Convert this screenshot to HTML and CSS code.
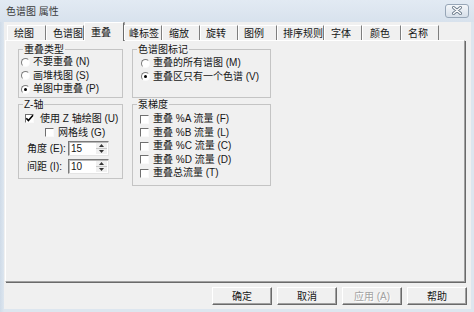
FILE: index.html
```html
<!DOCTYPE html>
<html lang="zh">
<head>
<meta charset="utf-8">
<title>色谱图 属性</title>
<link rel="stylesheet" href="styles.css">
</head>
<body>
<div class="window">
  <div class="titlebar">
    <span class="title">色谱图 属性</span>
    <span class="close">
      <svg width="12" height="9" viewBox="0 0 12 9"><path d="M2.5 1.5 L9.5 7.5 M9.5 1.5 L2.5 7.5" stroke="#6d7c8c" stroke-width="3" stroke-linecap="round"/><path d="M2.5 1.5 L9.5 7.5 M9.5 1.5 L2.5 7.5" stroke="#fff" stroke-width="1.3" stroke-linecap="round"/></svg>
    </span>
  </div>
  <div class="client">
    <div class="tabs">
      <div class="tab">绘图</div>
      <div class="tab">色谱图</div>
      <div class="tab active">重叠</div>
      <div class="tab">峰标签</div>
      <div class="tab">缩放</div>
      <div class="tab">旋转</div>
      <div class="tab">图例</div>
      <div class="tab">排序规则</div>
      <div class="tab">字体</div>
      <div class="tab">颜色</div>
      <div class="tab">名称</div>
    </div>
    <div class="panel">
      <fieldset class="group g-type">
        <legend>重叠类型</legend>
        <div class="opt"><span class="radio"></span>不要重叠 (N)</div>
        <div class="opt"><span class="radio"></span>画堆栈图 (S)</div>
        <div class="opt"><span class="radio on"></span>单图中重叠 (P)</div>
      </fieldset>
      <fieldset class="group g-mark">
        <legend>色谱图标记</legend>
        <div class="opt"><span class="radio"></span>重叠的所有谱图 (M)</div>
        <div class="opt"><span class="radio on"></span>重叠区只有一个色谱 (V)</div>
      </fieldset>
      <fieldset class="group g-z">
        <legend>Z-轴</legend>
        <div class="zrow use"><span class="check"><svg width="9" height="9" viewBox="0 0 9 9"><path d="M1.3 4.2 L3.4 6.6 L8 1.2" fill="none" stroke="#000" stroke-width="1.6"/></svg></span>使用 Z 轴绘图 (U)</div>
        <div class="zrow grid"><span class="check"></span>网格线 (G)</div>
        <div class="field first"><span class="flabel">角度 (E):</span><span class="spin"><span class="spin-val">15</span><span class="spin-btns"><span class="sb"><svg width="5" height="3" viewBox="0 0 5 3"><path d="M0 3 L2.5 0 L5 3Z" fill="#333"/></svg></span><span class="sb"><svg width="5" height="3" viewBox="0 0 5 3"><path d="M0 0 L2.5 3 L5 0Z" fill="#333"/></svg></span></span></span></div>
        <div class="field"><span class="flabel">间距 (I):</span><span class="spin"><span class="spin-val">10</span><span class="spin-btns"><span class="sb"><svg width="5" height="3" viewBox="0 0 5 3"><path d="M0 3 L2.5 0 L5 3Z" fill="#333"/></svg></span><span class="sb"><svg width="5" height="3" viewBox="0 0 5 3"><path d="M0 0 L2.5 3 L5 0Z" fill="#333"/></svg></span></span></span></div>
      </fieldset>
      <fieldset class="group g-pump">
        <legend>泵梯度</legend>
        <div class="opt"><span class="check"></span>重叠 %A 流量 (F)</div>
        <div class="opt"><span class="check"></span>重叠 %B 流量 (L)</div>
        <div class="opt"><span class="check"></span>重叠 %C 流量 (C)</div>
        <div class="opt"><span class="check"></span>重叠 %D 流量 (D)</div>
        <div class="opt"><span class="check"></span>重叠总流量 (T)</div>
      </fieldset>
    </div>
    <div class="buttons">
      <button class="btn">确定</button>
      <button class="btn">取消</button>
      <button class="btn" disabled>应用 (A)</button>
      <button class="btn">帮助</button>
    </div>
  </div>
</div>
</body>
</html>
```
FILE: styles.css
```css
* { box-sizing: border-box; }
html, body { margin: 0; padding: 0; }
body {
  width: 474px;
  height: 312px;
  overflow: hidden;
  background: linear-gradient(90deg, #cfdbe8, #dde6ef 4px, #dde6ef);
  font-family: "Liberation Sans", "Noto Sans CJK SC", sans-serif;
  font-size: 10px;
  color: #161616;
}
.window { display: flex; flex-direction: column; height: 312px; }
.titlebar {
  height: 22px;
  display: flex;
  align-items: center;
  justify-content: space-between;
  padding: 0 5px 0 6px;
  background: linear-gradient(#e2eaf3, #d8e2ed);
}
.title { line-height: 12px; color: #3c3c3c; margin-top: 2px; }
.close {
  width: 24px;
  height: 14px;
  margin-top: -1px;
  border: 1px solid #97a6b7;
  border-radius: 3px;
  background: linear-gradient(#f4f7fa, #d6dfe9);
  display: flex;
  align-items: center;
  justify-content: center;
}
.client {
  flex: 1;
  margin: 0 3px 3px 4px;
  background: #f0f0f0;
  display: flex;
  flex-direction: column;
}
.tabs {
  height: 18px;
  display: flex;
  align-items: flex-end;
  padding-left: 3px;
  position: relative;
  z-index: 1;
}
.tab {
  width: 38px;
  height: 15px;
  padding: 1px 0 0 6px;
  line-height: 13px;
  white-space: nowrap;
  border-top: 1px solid #fff;
  border-left: 1px solid #fff;
  border-right: 1px solid #7e7e7e;
  background: #f0f0f0;
}
.tab:nth-child(1), .tab:nth-child(7), .tab:nth-child(10) { width: 39px; }
.tab:nth-child(4) { padding-left: 4px; }
.tab:nth-child(6), .tab:nth-child(7), .tab:nth-child(8) { padding-left: 5px; }
.tab:nth-child(8) { width: 47px; }
.tab:nth-child(10) { padding-left: 7px; }
.tab.active {
  width: 40px;
  height: 19px;
  margin-bottom: -1px;
  padding-top: 3px;
  line-height: 14px;
  border-right-color: #6a6a6a;
  box-shadow: 1px 0 0 #a0a0a0;
}
.panel {
  width: 460px;
  height: 242px;
  margin-left: 1px;
  border: 1px solid;
  border-color: #fff #a0a0a0 #a0a0a0 #fff;
  box-shadow: 1px 1px 0 #6a6a6a;
  display: grid;
  grid-template-columns: 105px 139px;
  grid-template-rows: 55px auto;
  column-gap: 9px;
  align-items: start;
  align-content: start;
  padding: 2px 0 0 12px;
}
.group {
  margin: 0;
  padding: 0;
  min-width: 0;
  border: 1px solid #c4c4c4;
}
.group legend {
  margin-left: 4px;
  padding: 1px 1px 0;
  line-height: 11px;
  font-size: 10px;
  background: #f0f0f0;
}
.g-type, .g-mark { height: 55px; }
.g-z { height: 81px; }
.g-pump { height: 88px; }
.opt {
  display: flex;
  align-items: center;
  height: 13.5px;
  line-height: 12px;
  padding-top: 1px;
  white-space: nowrap;
}
.g-type .opt { padding-left: 2px; }
.g-mark { padding-top: 1px; }
.g-mark .opt { padding-left: 8px; }
.g-pump { padding-top: 2px; }
.g-pump .opt { padding-left: 7px; }
.radio {
  width: 9px;
  height: 9px;
  margin-right: 3px;
  border-radius: 50%;
  border: 1px solid;
  border-color: #7d7d7d #fafafa #fafafa #7d7d7d;
  background: #fff;
  display: flex;
  align-items: center;
  justify-content: center;
  flex: none;
}
.radio.on::after {
  content: "";
  width: 3px;
  height: 3px;
  border-radius: 50%;
  background: #000;
}
.check {
  width: 9px;
  height: 9px;
  margin-right: 4px;
  border: 1px solid;
  border-color: #6f6f6f #fafafa #fafafa #6f6f6f;
  background: #fff;
  display: flex;
  align-items: center;
  justify-content: center;
  flex: none;
  overflow: visible;
}
.check svg { flex: none; }
.g-z { padding-top: 1px; }
.zrow {
  height: 14px;
  line-height: 12px;
  padding-top: 1px;
  display: flex;
  align-items: center;
  white-space: nowrap;
}
.zrow.use { padding-left: 6px; }
.zrow.use .check { margin-right: 6px; }
.zrow.grid { padding-left: 26px; }
.field {
  display: flex;
  align-items: center;
  height: 15px;
  line-height: 12px;
  margin-top: 3px;
  padding-left: 8px;
}
.field.first { margin-top: 2px; }
.flabel { width: 41px; white-space: nowrap; padding-top: 1px; }
.spin {
  width: 41px;
  height: 15px;
  display: flex;
  border: 1px solid;
  border-color: #7a7a7a #e4e4e4 #e4e4e4 #7a7a7a;
  box-shadow: inset 1px 1px 0 #b9b9b9;
  background: #fff;
}
.spin-val { flex: 1; padding: 1px 0 0 2px; line-height: 12px; }
.spin-btns {
  width: 12px;
  display: flex;
  flex-direction: column;
  padding: 1px 1px 1px 0;
}
.sb {
  flex: 1;
  display: flex;
  align-items: center;
  justify-content: center;
  background: #f0f0f0;
  border-bottom: 1px solid #c8c8c8;
}
.sb:last-child { border-bottom: none; }
.buttons {
  display: flex;
  justify-content: flex-end;
  gap: 5px;
  margin-top: 5px;
  padding-right: 4px;
}
.btn {
  width: 60px;
  height: 18px;
  padding: 1px 0 0;
  font: inherit;
  line-height: 14px;
  color: #161616;
  background: #f0f0f0;
  border: 1px solid;
  border-color: #fff #6a6a6a #6a6a6a #fff;
  box-shadow: inset -1px -1px 0 #a0a0a0;
}
.btn:disabled { color: #a2a2a2; text-shadow: 1px 1px 0 #fff; }
```
